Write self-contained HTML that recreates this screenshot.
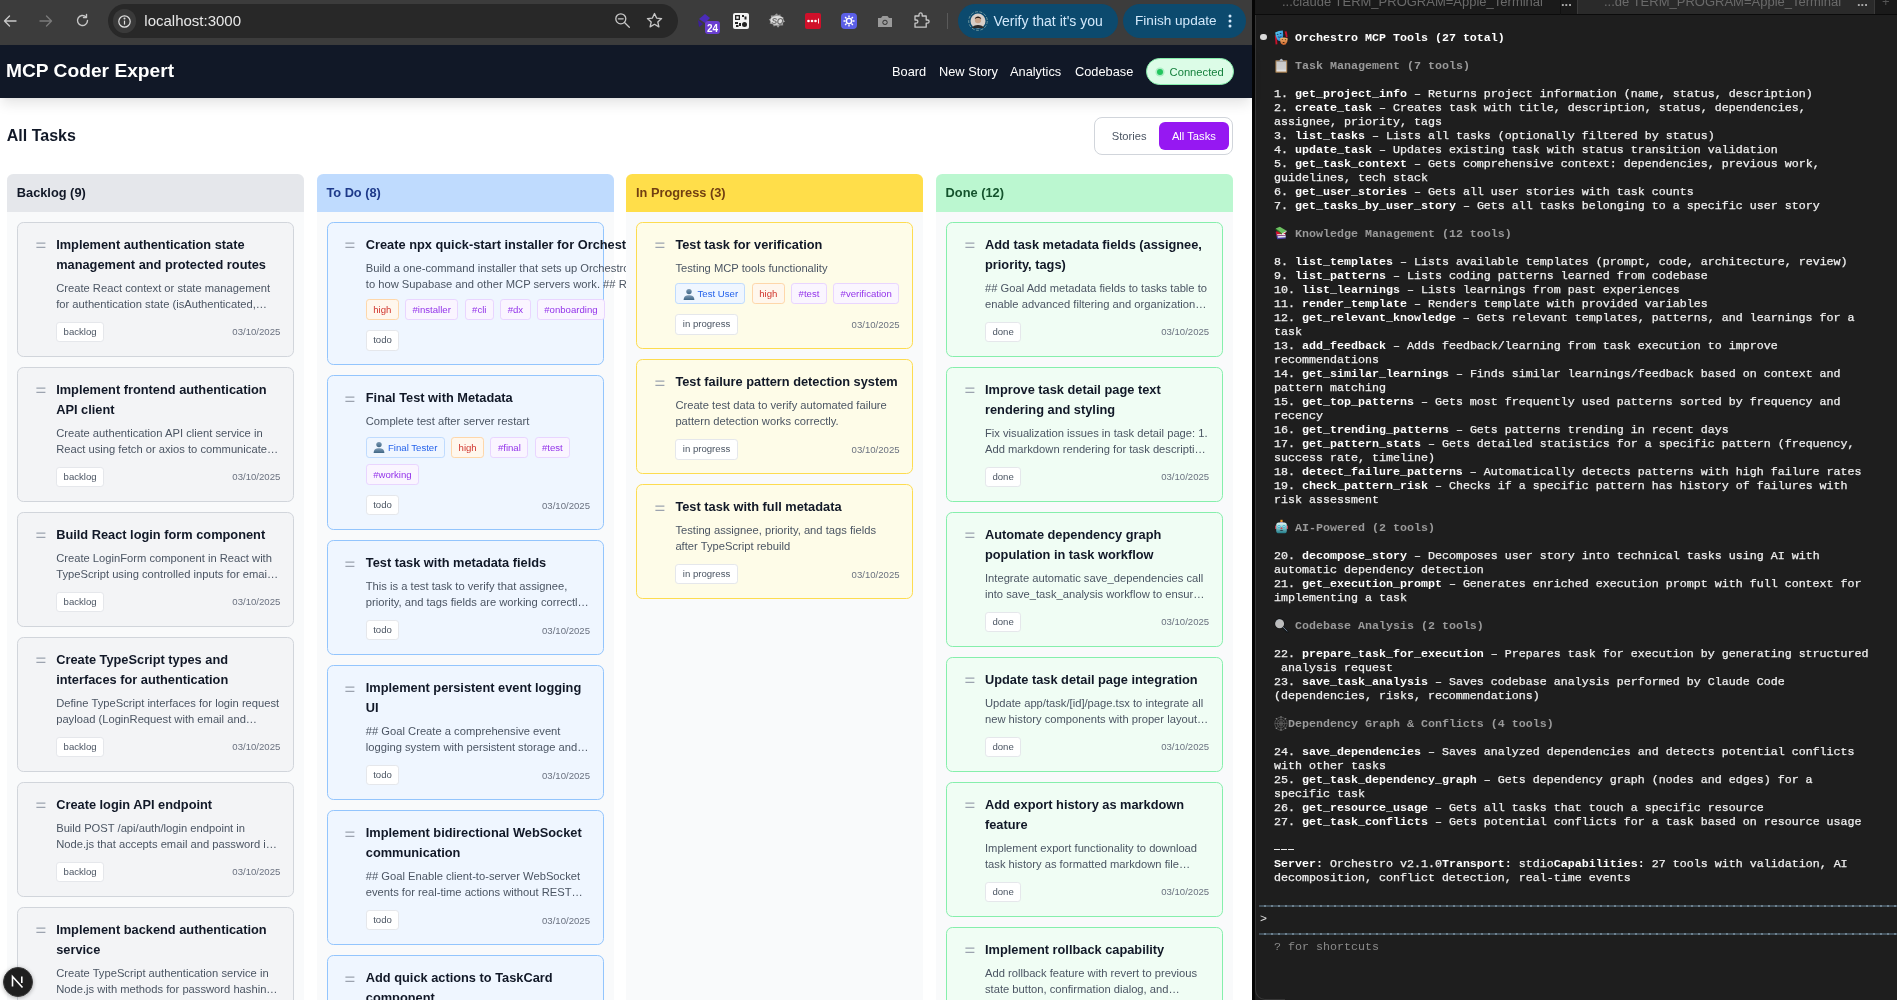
<!DOCTYPE html>
<html><head><meta charset="utf-8"><title>MCP Coder Expert</title><style>
*{box-sizing:border-box;margin:0;padding:0}
html,body{width:1897px;height:1000px;overflow:hidden}
body{position:relative;background:#1e1e1e;font-family:"Liberation Sans",sans-serif}
#chrome{position:absolute;left:0;top:0;width:1252px;height:45px;background:#3c3c3c;will-change:transform}
#nav{position:absolute;left:0;top:45px;width:1252px;height:53px;background:#111827;z-index:2;box-shadow:0 8px 12px -2.4px rgba(0,0,0,0.1),0 3.2px 4.8px -3.2px rgba(0,0,0,0.1)}
#page{position:absolute;left:0;top:98px;width:1252px;height:902px;background:#fff;overflow:hidden;will-change:transform}
#term{position:absolute;left:1252px;top:0;width:645px;height:1000px;background:#1e1e1e;overflow:hidden;will-change:transform}
.logo{will-change:transform;z-index:3;position:absolute;left:5.5px;top:57.8px;font-size:19.2px;font-weight:700;color:#fff;line-height:25px;white-space:nowrap}
.nl{will-change:transform;position:absolute;top:62px;font-size:12.8px;color:#fff;line-height:19px;white-space:nowrap}
.conn{will-change:transform;position:absolute;left:1146px;top:58px;width:88px;height:27px;border:1px solid #86efac;background:#dcfce7;border-radius:14px}
.conn .dot{position:absolute;left:9.6px;top:9.6px;width:6.4px;height:6.4px;border-radius:50%;background:#22c55e;box-shadow:0 0 0 1.6px rgba(34,197,94,0.25)}
.conn .ct{position:absolute;left:22.6px;top:5px;font-size:11.2px;line-height:16px;color:#15803d;white-space:nowrap}
h2{position:absolute;left:6.8px;top:27.2px;font-size:16px;font-weight:700;line-height:22.4px;color:#111827;white-space:nowrap}
.tog{position:absolute;left:1094.3px;top:19.2px;width:138.5px;height:37.5px;border:1px solid #d1d5db;border-radius:8px;background:#fff}
.tog .b1{position:absolute;left:16.5px;top:10px;font-size:11.2px;line-height:16px;color:#4b5563}
.tog .b2{position:absolute;left:63.7px;top:3.8px;width:69.8px;height:27.8px;border-radius:6px;background:#9618f2;color:#fff;font-size:11.2px;line-height:29.4px;text-align:center}
.col{position:absolute;top:76px;width:296.9px;height:900px;background:#f9fafb;border-radius:6.4px 6.4px 0 0}
.chd{height:37.6px;line-height:37.6px;padding-left:9.6px;font-size:12.8px;font-weight:700;border-radius:6.4px 6.4px 0 0;white-space:nowrap}
.cbd{padding:10.4px 9.9px 0 9.9px}
.card{position:relative;border:1px solid;border-radius:6.4px;padding:11.8px 12.8px 13.8px 12.8px;margin-bottom:10px;width:277.1px}
.card .hdl{position:absolute;left:16.8px;top:18.5px}
.cc{margin-left:25.3px}
.ttl{font-size:12.8px;font-weight:700;line-height:20px;color:#111827;white-space:nowrap}
.dsc{margin-top:5.2px;font-size:11.2px;line-height:16px;color:#4b5563;white-space:nowrap}
.tags{margin-top:7.2px}
.trow{display:flex;gap:6.4px;margin-bottom:6.4px;height:21.2px}
.trow:last-child{margin-bottom:0}
.tag{display:inline-flex;align-items:center;height:21.2px;border:1px solid;border-radius:3.2px;padding:0 6.4px;font-size:9.6px;white-space:nowrap}
.tu{background:#eff6ff;border-color:#bfdbfe;color:#2563eb}
.tu .usr{margin-right:2.8px}
.tp{background:#fff7ed;border-color:#fed7aa;color:#d0342c}
.tt{background:#faf5ff;border-color:#e9d5ff;color:#9333ea}
.ftr{margin-top:9.8px;display:flex;justify-content:space-between;align-items:center;height:20.4px}
.sb{display:inline-block;height:20.4px;line-height:18.4px;border:1px solid #e5e7eb;background:#fff;border-radius:3.2px;padding:0 6.4px;font-size:9.6px;color:#4b5563;white-space:nowrap}
.dt{font-size:9.6px;color:#6b7280;white-space:nowrap}
.wide{width:277.1px}

.nbtn{position:absolute;left:3px;top:967px;width:30px;height:30px;border-radius:50%;background:#1f1f1f;border:1.5px solid #3a3a3a;box-shadow:0 1px 4px rgba(0,0,0,0.3)}
/* terminal */
#tabs{position:absolute;left:0;top:0;width:645px;height:15px;background:#1a1a1a;border-bottom:1px solid #0b0b0b}
.tab{position:absolute;top:-8.5px;height:20px;font-size:13px;color:#6a6a6a;white-space:nowrap;line-height:20px}
#tbody{position:absolute;left:8px;top:31px;font-family:"Liberation Mono",monospace;font-size:11.667px;color:#e8e8e8}
.tl{position:relative;height:14px;line-height:14px;white-space:pre}
.ind{padding-left:14px}
.tb{font-weight:700;color:#fff}
.th{font-weight:700;color:#9a9a9a}
.tn{color:#f0f0f0;-webkit-text-stroke:0.25px #f0f0f0}
.tdot{position:absolute;left:0.1px;top:2.5px;width:6.8px;height:6.8px;border-radius:50%;background:#d9d9d9}
.tem{position:absolute;top:0.5px;line-height:0}
</style></head>
<body>
<div id="chrome"><svg style="position:absolute;left:3px;top:14px" width="14" height="14" viewBox="0 0 14 14" fill="none" stroke="#c8c8c8" stroke-width="1.4" stroke-linecap="round" stroke-linejoin="round"><path d="M13 7H1.5M6.5 2L1.5 7l5 5"/></svg><svg style="position:absolute;left:39px;top:14px" width="14" height="14" viewBox="0 0 14 14" fill="none" stroke="#7a7a7a" stroke-width="1.4" stroke-linecap="round" stroke-linejoin="round"><path d="M1 7h11.5M7.5 2l5 5-5 5"/></svg><svg style="position:absolute;left:75px;top:13px" width="15" height="15" viewBox="0 0 15 15" fill="none" stroke="#c8c8c8" stroke-width="1.4" stroke-linecap="round"><path d="M12.5 7.5a5 5 0 1 1-1.6-3.7"/><path d="M11.5 1.5v3h-3" stroke-linejoin="round"/></svg><div style="position:absolute;left:108px;top:4.4px;width:570px;height:33.2px;border-radius:17px;background:#282828"></div><div style="position:absolute;left:113px;top:9.3px;width:23.4px;height:23.4px;border-radius:50%;background:#3a3a3a"></div><svg style="position:absolute;left:118.3px;top:14.6px" width="13" height="13" viewBox="0 0 13 13" fill="none" stroke="#e0e0e0" stroke-width="1.2"><circle cx="6.5" cy="6.5" r="5.7"/><path d="M6.5 5.6v4"/><circle cx="6.5" cy="3.6" r="0.4" fill="#e0e0e0"/></svg><div style="position:absolute;left:144.3px;top:11px;font-size:15px;line-height:20px;color:#e8e8e8;white-space:nowrap">localhost:3000</div><svg style="position:absolute;left:614px;top:12px" width="17" height="17" viewBox="0 0 17 17" fill="none" stroke="#c8c8c8" stroke-width="1.3" stroke-linecap="round"><circle cx="6.8" cy="6.8" r="5"/><path d="M4.4 6.8h4.8M10.5 10.5l4.8 4.8"/></svg><svg style="position:absolute;left:646px;top:12px" width="17" height="17" viewBox="0 0 17 17" fill="none" stroke="#c8c8c8" stroke-width="1.3" stroke-linejoin="round"><path d="M8.5 1.5l2.1 4.6 5 .5-3.8 3.4 1.1 4.9-4.4-2.6-4.4 2.6 1.1-4.9L1.4 6.6l5-.5z"/></svg><svg style="position:absolute;left:697px;top:11px" width="24" height="24" viewBox="0 0 24 24"><path d="M2 8 L8 3 L13 7 L8 12 Z" fill="#4a2bb8"/><path d="M1 9 L6 13 L2 16 Z" fill="#3b1f9a"/><rect x="8" y="10" width="15" height="13" rx="3" fill="#6a3fd1"/><text x="15.5" y="20.5" font-size="10" font-weight="700" fill="#fff" text-anchor="middle" font-family="Liberation Sans">24</text></svg><div style="position:absolute;left:733px;top:13px;width:16px;height:16px;background:#f2f2f2;border-radius:2px"></div><svg style="position:absolute;left:734px;top:14px" width="14" height="14" viewBox="0 0 14 14" fill="#222"><rect x="1" y="1" width="5" height="5"/><rect x="2.3" y="2.3" width="2.4" height="2.4" fill="#f2f2f2"/><rect x="8" y="1" width="2" height="2"/><rect x="10.5" y="2.5" width="2" height="3"/><rect x="1" y="8" width="3" height="2"/><rect x="2" y="11" width="2.5" height="2"/><rect x="5" y="9" width="2" height="3"/><circle cx="10.5" cy="10.5" r="2.5"/></svg><svg style="position:absolute;left:768px;top:12px" width="18" height="17" viewBox="0 0 18 17"><path d="M9 1.2 L9.8 3 L12.6 2.6 L12.4 4.2 L15.6 5.4 L15 7.4 L17.2 9.6 L15 10.6 L15.2 13.4 L12.2 13 L10 15.8 L8.4 13.6 L5.6 14.4 L5.2 12.4 L1.6 11.6 L2.6 9.4 L0.8 7.4 L3.2 6.2 L2.8 3.6 L6 3.6 Z" fill="#9a9a9a"/><path d="M2.4 8.6 Q2 4.6 8.6 4 Q15.4 3.8 15.6 8.4 Q15.8 12.6 9 12.8 Q2.8 13 2.4 8.6 Z" fill="#dcdcdc"/><text x="9.2" y="11.6" font-family="Liberation Sans" font-weight="700" font-style="italic" font-size="8.6" fill="#6e6e6e" text-anchor="middle" letter-spacing="-0.4">SQ</text></svg><div style="position:absolute;left:805px;top:13px;width:16px;height:16px;background:#d0102a;border-radius:2px"></div><svg style="position:absolute;left:805px;top:13px" width="16" height="16" viewBox="0 0 16 16" fill="#fff"><circle cx="3.5" cy="8" r="1.3"/><circle cx="7" cy="8" r="1.3"/><circle cx="10.5" cy="8" r="1.3"/><rect x="13" y="5.5" width="0.9" height="5"/></svg><div style="position:absolute;left:841px;top:13px;width:16px;height:16px;background:#5b5fe8;border-radius:4px"></div><svg style="position:absolute;left:841px;top:13px" width="16" height="16" viewBox="0 0 16 16" fill="none" stroke="#fff" stroke-width="1.4"><circle cx="8" cy="8" r="2.6"/><path d="M8 2.5v2M8 11.5v2M2.5 8h2M11.5 8h2M4.1 4.1l1.4 1.4M10.5 10.5l1.4 1.4M4.1 11.9l1.4-1.4M10.5 5.5l1.4-1.4"/></svg><svg style="position:absolute;left:877px;top:14px" width="16" height="14" viewBox="0 0 16 14"><path d="M1 4h3l1.5-2h5L12 4h3v9H1z" fill="#9a9a9a"/><circle cx="8" cy="8.3" r="2.6" fill="#3c3c3c"/><circle cx="8" cy="8.3" r="1.6" fill="#9a9a9a"/></svg><svg style="position:absolute;left:913px;top:12px" width="17" height="17" viewBox="0 0 17 17" fill="none" stroke="#c8c8c8" stroke-width="1.3" stroke-linejoin="round"><path d="M2 4h4V2.5a1.6 1.6 0 0 1 3.2 0V4h4v4h1.3a1.6 1.6 0 0 1 0 3.2H13.2v4H2v-4h1.3a1.6 1.6 0 0 0 0-3.2H2z"/></svg><div style="position:absolute;left:946.5px;top:13px;width:1px;height:16px;background:#5a5a5a"></div><div style="position:absolute;left:958px;top:4.2px;width:160px;height:33.6px;border-radius:17px;background:#0c4a6e"></div><svg style="position:absolute;left:968px;top:11px" width="20" height="20" viewBox="0 0 20 20"><circle cx="10" cy="10" r="9.3" fill="none" stroke="#8aa" stroke-width="0.8" stroke-dasharray="3 1.5"/><circle cx="10" cy="10" r="7.5" fill="#d8cfc8"/><path d="M4 17 C5 13 15 13 16 17 Z" fill="#2a2a2a"/><circle cx="10" cy="9" r="3.2" fill="#c9a48a"/><path d="M6.8 8 C7 4.5 13 4.5 13.2 8 C12 6.5 8 6.5 6.8 8Z" fill="#2b2018"/></svg><div style="position:absolute;left:993.5px;top:10.5px;font-size:14px;line-height:20px;color:#d3e9fb;white-space:nowrap">Verify that it's you</div><div style="position:absolute;left:1123px;top:4.2px;width:122.8px;height:33.6px;border-radius:17px;background:#0c4a6e"></div><div style="position:absolute;left:1135px;top:10.5px;font-size:13.6px;line-height:20px;color:#d3e9fb;white-space:nowrap">Finish update</div><svg style="position:absolute;left:1227px;top:13px" width="6" height="16" viewBox="0 0 6 16" fill="#d3e9fb"><circle cx="3" cy="3" r="1.5"/><circle cx="3" cy="8" r="1.5"/><circle cx="3" cy="13" r="1.5"/></svg></div>
<div id="nav"></div>
<div class="logo">MCP Coder Expert</div>
<div class="nl" style="left:892px;z-index:3">Board</div>
<div class="nl" style="left:938.8px;z-index:3">New Story</div>
<div class="nl" style="left:1010px;z-index:3">Analytics</div>
<div class="nl" style="left:1075.3px;z-index:3">Codebase</div>
<div class="conn" style="z-index:3"><span class="dot"></span><span class="ct">Connected</span></div>
<div id="page">
<h2>All Tasks</h2>
<div class="tog"><span class="b1">Stories</span><span class="b2">All Tasks</span></div>
<div class="col" style="left:7.20px"><div class="chd" style="background:#e5e7eb;color:#111827">Backlog (9)</div><div class="cbd"><div class="card " style="background:#f3f4f6;border-color:#d1d5db"><svg class="hdl" width="12" height="8" viewBox="0 0 12 8" fill="none" stroke="#9ca3af" stroke-width="1.25" stroke-linecap="butt"><path d="M1.4 2.2h9M1.4 6.4h9"/></svg><div class="cc"><div class="ttl">Implement authentication state<br>management and protected routes</div><div class="dsc">Create React context or state management<br>for authentication state (isAuthenticated,…</div><div class="ftr"><span class="sb">backlog</span><span class="dt">03/10/2025</span></div></div></div><div class="card " style="background:#f3f4f6;border-color:#d1d5db"><svg class="hdl" width="12" height="8" viewBox="0 0 12 8" fill="none" stroke="#9ca3af" stroke-width="1.25" stroke-linecap="butt"><path d="M1.4 2.2h9M1.4 6.4h9"/></svg><div class="cc"><div class="ttl">Implement frontend authentication<br>API client</div><div class="dsc">Create authentication API client service in<br>React using fetch or axios to communicate…</div><div class="ftr"><span class="sb">backlog</span><span class="dt">03/10/2025</span></div></div></div><div class="card " style="background:#f3f4f6;border-color:#d1d5db"><svg class="hdl" width="12" height="8" viewBox="0 0 12 8" fill="none" stroke="#9ca3af" stroke-width="1.25" stroke-linecap="butt"><path d="M1.4 2.2h9M1.4 6.4h9"/></svg><div class="cc"><div class="ttl">Build React login form component</div><div class="dsc">Create LoginForm component in React with<br>TypeScript using controlled inputs for emai…</div><div class="ftr"><span class="sb">backlog</span><span class="dt">03/10/2025</span></div></div></div><div class="card " style="background:#f3f4f6;border-color:#d1d5db"><svg class="hdl" width="12" height="8" viewBox="0 0 12 8" fill="none" stroke="#9ca3af" stroke-width="1.25" stroke-linecap="butt"><path d="M1.4 2.2h9M1.4 6.4h9"/></svg><div class="cc"><div class="ttl">Create TypeScript types and<br>interfaces for authentication</div><div class="dsc">Define TypeScript interfaces for login request<br>payload (LoginRequest with email and…</div><div class="ftr"><span class="sb">backlog</span><span class="dt">03/10/2025</span></div></div></div><div class="card " style="background:#f3f4f6;border-color:#d1d5db"><svg class="hdl" width="12" height="8" viewBox="0 0 12 8" fill="none" stroke="#9ca3af" stroke-width="1.25" stroke-linecap="butt"><path d="M1.4 2.2h9M1.4 6.4h9"/></svg><div class="cc"><div class="ttl">Create login API endpoint</div><div class="dsc">Build POST /api/auth/login endpoint in<br>Node.js that accepts email and password i…</div><div class="ftr"><span class="sb">backlog</span><span class="dt">03/10/2025</span></div></div></div><div class="card " style="background:#f3f4f6;border-color:#d1d5db"><svg class="hdl" width="12" height="8" viewBox="0 0 12 8" fill="none" stroke="#9ca3af" stroke-width="1.25" stroke-linecap="butt"><path d="M1.4 2.2h9M1.4 6.4h9"/></svg><div class="cc"><div class="ttl">Implement backend authentication<br>service</div><div class="dsc">Create TypeScript authentication service in<br>Node.js with methods for password hashin…</div><div class="ftr"><span class="sb">backlog</span><span class="dt">03/10/2025</span></div></div></div></div></div><div class="col" style="left:316.80px"><div class="chd" style="background:#bfdbfe;color:#1e3a8a">To Do (8)</div><div class="cbd"><div class="card wide plus1" style="background:#eff6ff;border-color:#93c5fd"><svg class="hdl" width="12" height="8" viewBox="0 0 12 8" fill="none" stroke="#9ca3af" stroke-width="1.25" stroke-linecap="butt"><path d="M1.4 2.2h9M1.4 6.4h9"/></svg><div class="cc"><div class="ttl">Create npx quick-start installer for Orchestro with one-command setup</div><div class="dsc">Build a one-command installer that sets up Orchestro MCP server similar<br>to how Supabase and other MCP servers work. ## Requirements</div><div class="tags"><div class="trow"><span class="tag tp">high</span><span class="tag tt">#installer</span><span class="tag tt">#cli</span><span class="tag tt">#dx</span><span class="tag tt">#onboarding</span></div></div><div class="ftr"><span class="sb">todo</span></div></div></div><div class="card plus1" style="background:#eff6ff;border-color:#93c5fd"><svg class="hdl" width="12" height="8" viewBox="0 0 12 8" fill="none" stroke="#9ca3af" stroke-width="1.25" stroke-linecap="butt"><path d="M1.4 2.2h9M1.4 6.4h9"/></svg><div class="cc"><div class="ttl">Final Test with Metadata</div><div class="dsc">Complete test after server restart</div><div class="tags"><div class="trow"><span class="tag tu"><svg class="usr" width="12" height="12" viewBox="0 0 12 12"><defs><linearGradient id="ug" x1="0" y1="0" x2="0" y2="1"><stop offset="0" stop-color="#7e9bb5"/><stop offset="1" stop-color="#3f6685"/></linearGradient></defs><circle cx="6" cy="3.6" r="2.7" fill="url(#ug)"/><path d="M0.6 12 C0.8 8.2 2.8 7.2 6 7.2 C9.2 7.2 11.2 8.2 11.4 12 Z" fill="url(#ug)"/></svg>Final Tester</span><span class="tag tp">high</span><span class="tag tt">#final</span><span class="tag tt">#test</span></div><div class="trow"><span class="tag tt">#working</span></div></div><div class="ftr"><span class="sb">todo</span><span class="dt">03/10/2025</span></div></div></div><div class="card " style="background:#eff6ff;border-color:#93c5fd"><svg class="hdl" width="12" height="8" viewBox="0 0 12 8" fill="none" stroke="#9ca3af" stroke-width="1.25" stroke-linecap="butt"><path d="M1.4 2.2h9M1.4 6.4h9"/></svg><div class="cc"><div class="ttl">Test task with metadata fields</div><div class="dsc">This is a test task to verify that assignee,<br>priority, and tags fields are working correctl…</div><div class="ftr"><span class="sb">todo</span><span class="dt">03/10/2025</span></div></div></div><div class="card " style="background:#eff6ff;border-color:#93c5fd"><svg class="hdl" width="12" height="8" viewBox="0 0 12 8" fill="none" stroke="#9ca3af" stroke-width="1.25" stroke-linecap="butt"><path d="M1.4 2.2h9M1.4 6.4h9"/></svg><div class="cc"><div class="ttl">Implement persistent event logging<br>UI</div><div class="dsc">## Goal Create a comprehensive event<br>logging system with persistent storage and…</div><div class="ftr"><span class="sb">todo</span><span class="dt">03/10/2025</span></div></div></div><div class="card " style="background:#eff6ff;border-color:#93c5fd"><svg class="hdl" width="12" height="8" viewBox="0 0 12 8" fill="none" stroke="#9ca3af" stroke-width="1.25" stroke-linecap="butt"><path d="M1.4 2.2h9M1.4 6.4h9"/></svg><div class="cc"><div class="ttl">Implement bidirectional WebSocket<br>communication</div><div class="dsc">## Goal Enable client-to-server WebSocket<br>events for real-time actions without REST…</div><div class="ftr"><span class="sb">todo</span><span class="dt">03/10/2025</span></div></div></div><div class="card " style="background:#eff6ff;border-color:#93c5fd"><svg class="hdl" width="12" height="8" viewBox="0 0 12 8" fill="none" stroke="#9ca3af" stroke-width="1.25" stroke-linecap="butt"><path d="M1.4 2.2h9M1.4 6.4h9"/></svg><div class="cc"><div class="ttl">Add quick actions to TaskCard<br>component</div><div class="dsc">Add quick action buttons to TaskCard for<br>status changes…</div><div class="ftr"><span class="sb">todo</span><span class="dt">03/10/2025</span></div></div></div></div></div><div class="col" style="left:626.40px"><div class="chd" style="background:#ffde4a;color:#713f12">In Progress (3)</div><div class="cbd"><div class="card " style="background:#fefce8;border-color:#fddc50"><svg class="hdl" width="12" height="8" viewBox="0 0 12 8" fill="none" stroke="#9ca3af" stroke-width="1.25" stroke-linecap="butt"><path d="M1.4 2.2h9M1.4 6.4h9"/></svg><div class="cc"><div class="ttl">Test task for verification</div><div class="dsc">Testing MCP tools functionality</div><div class="tags"><div class="trow"><span class="tag tu"><svg class="usr" width="12" height="12" viewBox="0 0 12 12"><defs><linearGradient id="ug" x1="0" y1="0" x2="0" y2="1"><stop offset="0" stop-color="#7e9bb5"/><stop offset="1" stop-color="#3f6685"/></linearGradient></defs><circle cx="6" cy="3.6" r="2.7" fill="url(#ug)"/><path d="M0.6 12 C0.8 8.2 2.8 7.2 6 7.2 C9.2 7.2 11.2 8.2 11.4 12 Z" fill="url(#ug)"/></svg>Test User</span><span class="tag tp">high</span><span class="tag tt">#test</span><span class="tag tt">#verification</span></div></div><div class="ftr"><span class="sb">in progress</span><span class="dt">03/10/2025</span></div></div></div><div class="card " style="background:#fefce8;border-color:#fddc50"><svg class="hdl" width="12" height="8" viewBox="0 0 12 8" fill="none" stroke="#9ca3af" stroke-width="1.25" stroke-linecap="butt"><path d="M1.4 2.2h9M1.4 6.4h9"/></svg><div class="cc"><div class="ttl">Test failure pattern detection system</div><div class="dsc">Create test data to verify automated failure<br>pattern detection works correctly.</div><div class="ftr"><span class="sb">in progress</span><span class="dt">03/10/2025</span></div></div></div><div class="card " style="background:#fefce8;border-color:#fddc50"><svg class="hdl" width="12" height="8" viewBox="0 0 12 8" fill="none" stroke="#9ca3af" stroke-width="1.25" stroke-linecap="butt"><path d="M1.4 2.2h9M1.4 6.4h9"/></svg><div class="cc"><div class="ttl">Test task with full metadata</div><div class="dsc">Testing assignee, priority, and tags fields<br>after TypeScript rebuild</div><div class="ftr"><span class="sb">in progress</span><span class="dt">03/10/2025</span></div></div></div></div></div><div class="col" style="left:936.00px"><div class="chd" style="background:#bbf7d0;color:#14532d">Done (12)</div><div class="cbd"><div class="card " style="background:#f0fdf4;border-color:#86efac"><svg class="hdl" width="12" height="8" viewBox="0 0 12 8" fill="none" stroke="#9ca3af" stroke-width="1.25" stroke-linecap="butt"><path d="M1.4 2.2h9M1.4 6.4h9"/></svg><div class="cc"><div class="ttl">Add task metadata fields (assignee,<br>priority, tags)</div><div class="dsc">## Goal Add metadata fields to tasks table to<br>enable advanced filtering and organization…</div><div class="ftr"><span class="sb">done</span><span class="dt">03/10/2025</span></div></div></div><div class="card " style="background:#f0fdf4;border-color:#86efac"><svg class="hdl" width="12" height="8" viewBox="0 0 12 8" fill="none" stroke="#9ca3af" stroke-width="1.25" stroke-linecap="butt"><path d="M1.4 2.2h9M1.4 6.4h9"/></svg><div class="cc"><div class="ttl">Improve task detail page text<br>rendering and styling</div><div class="dsc">Fix visualization issues in task detail page: 1.<br>Add markdown rendering for task descripti…</div><div class="ftr"><span class="sb">done</span><span class="dt">03/10/2025</span></div></div></div><div class="card " style="background:#f0fdf4;border-color:#86efac"><svg class="hdl" width="12" height="8" viewBox="0 0 12 8" fill="none" stroke="#9ca3af" stroke-width="1.25" stroke-linecap="butt"><path d="M1.4 2.2h9M1.4 6.4h9"/></svg><div class="cc"><div class="ttl">Automate dependency graph<br>population in task workflow</div><div class="dsc">Integrate automatic save_dependencies call<br>into save_task_analysis workflow to ensur…</div><div class="ftr"><span class="sb">done</span><span class="dt">03/10/2025</span></div></div></div><div class="card " style="background:#f0fdf4;border-color:#86efac"><svg class="hdl" width="12" height="8" viewBox="0 0 12 8" fill="none" stroke="#9ca3af" stroke-width="1.25" stroke-linecap="butt"><path d="M1.4 2.2h9M1.4 6.4h9"/></svg><div class="cc"><div class="ttl">Update task detail page integration</div><div class="dsc">Update app/task/[id]/page.tsx to integrate all<br>new history components with proper layout…</div><div class="ftr"><span class="sb">done</span><span class="dt">03/10/2025</span></div></div></div><div class="card " style="background:#f0fdf4;border-color:#86efac"><svg class="hdl" width="12" height="8" viewBox="0 0 12 8" fill="none" stroke="#9ca3af" stroke-width="1.25" stroke-linecap="butt"><path d="M1.4 2.2h9M1.4 6.4h9"/></svg><div class="cc"><div class="ttl">Add export history as markdown<br>feature</div><div class="dsc">Implement export functionality to download<br>task history as formatted markdown file…</div><div class="ftr"><span class="sb">done</span><span class="dt">03/10/2025</span></div></div></div><div class="card " style="background:#f0fdf4;border-color:#86efac"><svg class="hdl" width="12" height="8" viewBox="0 0 12 8" fill="none" stroke="#9ca3af" stroke-width="1.25" stroke-linecap="butt"><path d="M1.4 2.2h9M1.4 6.4h9"/></svg><div class="cc"><div class="ttl">Implement rollback capability</div><div class="dsc">Add rollback feature with revert to previous<br>state button, confirmation dialog, and…</div><div class="ftr"><span class="sb">done</span><span class="dt">03/10/2025</span></div></div></div></div></div>
</div>
<div class="nbtn" style="z-index:5"><svg width="27" height="27" viewBox="0 0 27 27" style="position:absolute;left:0;top:0"><path d="M8.5 18.5V8.5L18.5 19.5" fill="none" stroke="#fff" stroke-width="1.6"/><path d="M17.8 8.5v6.5" stroke="#fff" stroke-width="1.6"/></svg></div>
<div id="term">
<div id="tabs">
<div class="tab" style="left:30px">...claude TERM_PROGRAM=Apple_Terminal</div>
<div style="position:absolute;left:308px;top:0;width:1px;height:15px;background:#111"></div>
<div style="position:absolute;left:325px;top:0;width:298px;height:14px;background:#2a2a2a;border-left:1px solid #3a3a3a;border-right:1px solid #3a3a3a"></div>
<div class="tab" style="left:352px">...de TERM_PROGRAM=Apple_Terminal</div>
<div class="tab" style="left:309px;color:#aaa;font-weight:700">...</div>
<div class="tab" style="left:605px;color:#aaa;font-weight:700">...</div>
<div class="tab" style="left:630px;color:#555">+</div>
</div>
<div style="position:absolute;left:0;top:0;width:3px;height:1000px;background:#050505"></div><div style="position:absolute;left:3px;top:15px;width:30px;height:985px;border-left:1px solid #363636;border-bottom:1px solid #363636;border-bottom-left-radius:10px"></div>
<div id="tbody"><div class="tl"><span class="tdot"></span><span class="tem" style="left:14.2px;top:-1.2px"><svg width="15" height="15" viewBox="0 0 15 15"><defs><linearGradient id="mbg" x1="0" y1="0" x2="1" y2="1"><stop offset="0" stop-color="#5ccff5"/><stop offset="1" stop-color="#2a7fd0"/></linearGradient><linearGradient id="mog" x1="0" y1="0" x2="0" y2="1"><stop offset="0" stop-color="#f4b870"/><stop offset="1" stop-color="#c8602a"/></linearGradient></defs><path d="M0.8 5.5 Q1.2 10 1.6 14.4 L3.4 14.2 Q3 9 2.6 5.2 Z" fill="#c8102a"/><path d="M10.6 1.4 Q11.4 4 12 7.4 L13.6 7.2 Q13.2 3.6 12.6 1.2 Z" fill="#c8102a"/><path d="M1.2 2.4 Q4.6 0.6 8.8 0.4 Q9.8 5 8.6 8.4 Q7 11.4 4.6 10.8 Q2.2 9.6 1.2 2.4 Z" fill="url(#mbg)"/><ellipse cx="3.6" cy="4.2" rx="0.9" ry="0.5" fill="#143050"/><ellipse cx="6.6" cy="3.6" rx="0.9" ry="0.5" fill="#143050"/><path d="M3.8 6.8 Q5.6 7.8 7.4 6.6" stroke="#143050" stroke-width="0.7" fill="none"/><path d="M6.2 8.2 Q9.6 6.8 13.6 8.2 Q14 12.4 11.6 14.4 Q9 15.6 7.2 13.8 Q5.8 11.8 6.2 8.2 Z" fill="url(#mog)"/><ellipse cx="8.4" cy="9.4" rx="0.8" ry="0.45" fill="#3a2410"/><ellipse cx="11.4" cy="9.8" rx="0.8" ry="0.45" fill="#3a2410"/><ellipse cx="9.6" cy="12.6" rx="1" ry="0.5" fill="#3a2410"/></svg></span><span style="padding-left:35px"></span><span class="tb">Orchestro MCP Tools (27 total)</span></div><div class="tl"></div><div class="tl"><span class="tem" style="left:14.7px;top:-1.4px"><svg width="13" height="15" viewBox="0 0 13 15"><defs><linearGradient id="cpg" x1="0" y1="0" x2="0" y2="1"><stop offset="0" stop-color="#c8c8c8"/><stop offset="0.75" stop-color="#cdcdcd"/><stop offset="1" stop-color="#ececec"/></linearGradient></defs><rect x="0.4" y="2.2" width="11.8" height="12.5" rx="0.6" fill="#a9804f"/><rect x="1.4" y="3.6" width="9.8" height="9.9" fill="url(#cpg)"/><path d="M4.4 2.9 L5.2 1.4 Q6.3 0.3 7.4 1.4 L8.2 2.9 Z" fill="#b4b9c2"/><rect x="1.4" y="2.9" width="9.8" height="0.8" fill="#9a9fa6"/></svg></span><span style="padding-left:35px"></span><span class="th">Task Management (7 tools)</span></div><div class="tl"></div><div class="tl ind"><span class="tn">1. </span><span class="tb">get_project_info</span><span class="tn"> – Returns project information (name, status, description)</span></div><div class="tl ind"><span class="tn">2. </span><span class="tb">create_task</span><span class="tn"> – Creates task with title, description, status, dependencies,</span></div><div class="tl ind"><span class="tn">assignee, priority, tags</span></div><div class="tl ind"><span class="tn">3. </span><span class="tb">list_tasks</span><span class="tn"> – Lists all tasks (optionally filtered by status)</span></div><div class="tl ind"><span class="tn">4. </span><span class="tb">update_task</span><span class="tn"> – Updates existing task with status transition validation</span></div><div class="tl ind"><span class="tn">5. </span><span class="tb">get_task_context</span><span class="tn"> – Gets comprehensive context: dependencies, previous work,</span></div><div class="tl ind"><span class="tn">guidelines, tech stack</span></div><div class="tl ind"><span class="tn">6. </span><span class="tb">get_user_stories</span><span class="tn"> – Gets all user stories with task counts</span></div><div class="tl ind"><span class="tn">7. </span><span class="tb">get_tasks_by_user_story</span><span class="tn"> – Gets all tasks belonging to a specific user story</span></div><div class="tl"></div><div class="tl"><span class="tem" style="left:14.6px;top:-1.4px"><svg width="13" height="14" viewBox="0 0 13 14"><path d="M0.6 6.2 L2.2 13.2 L10.8 12.6 L10.4 8.2 Z" fill="#4a3fa8"/><path d="M2.6 10.2 L10.6 9.6 L10.7 11.2 L2.9 11.8 Z" fill="#e8e8f0"/><path d="M0.8 5.6 L1.6 9.4 L10.2 9.2 L10.4 6.4 L4 5.2 Z" fill="#d3102a"/><path d="M2 8.2 L10.2 7.9 L10.2 9 L2.3 9.3 Z" fill="#f2f2f2"/><path d="M0.7 2.6 L4.8 0.8 L11.6 4.8 L7.2 7.8 Z" fill="#6cc160"/><path d="M0.7 2.6 L7.2 7.8 L6.6 8.4 L0.6 3.6 Z" fill="#2e7d2a"/><path d="M7 7.4 L11.6 4.8 L11.4 6 L7.2 8.6 Z" fill="#eeeeee"/></svg></span><span style="padding-left:35px"></span><span class="th">Knowledge Management (12 tools)</span></div><div class="tl"></div><div class="tl ind"><span class="tn">8. </span><span class="tb">list_templates</span><span class="tn"> – Lists available templates (prompt, code, architecture, review)</span></div><div class="tl ind"><span class="tn">9. </span><span class="tb">list_patterns</span><span class="tn"> – Lists coding patterns learned from codebase</span></div><div class="tl ind"><span class="tn">10. </span><span class="tb">list_learnings</span><span class="tn"> – Lists learnings from past experiences</span></div><div class="tl ind"><span class="tn">11. </span><span class="tb">render_template</span><span class="tn"> – Renders template with provided variables</span></div><div class="tl ind"><span class="tn">12. </span><span class="tb">get_relevant_knowledge</span><span class="tn"> – Gets relevant templates, patterns, and learnings for a</span></div><div class="tl ind"><span class="tn">task</span></div><div class="tl ind"><span class="tn">13. </span><span class="tb">add_feedback</span><span class="tn"> – Adds feedback/learning from task execution to improve</span></div><div class="tl ind"><span class="tn">recommendations</span></div><div class="tl ind"><span class="tn">14. </span><span class="tb">get_similar_learnings</span><span class="tn"> – Finds similar learnings/feedback based on context and</span></div><div class="tl ind"><span class="tn">pattern matching</span></div><div class="tl ind"><span class="tn">15. </span><span class="tb">get_top_patterns</span><span class="tn"> – Gets most frequently used patterns sorted by frequency and</span></div><div class="tl ind"><span class="tn">recency</span></div><div class="tl ind"><span class="tn">16. </span><span class="tb">get_trending_patterns</span><span class="tn"> – Gets patterns trending in recent days</span></div><div class="tl ind"><span class="tn">17. </span><span class="tb">get_pattern_stats</span><span class="tn"> – Gets detailed statistics for a specific pattern (frequency,</span></div><div class="tl ind"><span class="tn">success rate, timeline)</span></div><div class="tl ind"><span class="tn">18. </span><span class="tb">detect_failure_patterns</span><span class="tn"> – Automatically detects patterns with high failure rates</span></div><div class="tl ind"><span class="tn">19. </span><span class="tb">check_pattern_risk</span><span class="tn"> – Checks if a specific pattern has history of failures with</span></div><div class="tl ind"><span class="tn">risk assessment</span></div><div class="tl"></div><div class="tl"><span class="tem" style="left:14.5px;top:-2px"><svg width="13" height="15" viewBox="0 0 13 15"><defs><linearGradient id="rbg" x1="0" y1="0" x2="0" y2="1"><stop offset="0" stop-color="#dff5f3"/><stop offset="0.45" stop-color="#8fc9d0"/><stop offset="1" stop-color="#1f7d8a"/></linearGradient></defs><rect x="5.4" y="0.8" width="2.2" height="2.4" fill="#f59a2a"/><rect x="5" y="3" width="3" height="0.9" fill="#7b4fb0"/><rect x="0.1" y="6.4" width="1.6" height="3.6" rx="0.6" fill="#d0485a"/><rect x="11.3" y="6.4" width="1.6" height="3.6" rx="0.6" fill="#d0485a"/><rect x="1.2" y="3.5" width="10.6" height="10.8" rx="2.6" fill="url(#rbg)"/><circle cx="4" cy="7.6" r="1.5" fill="#3cb4cc"/><circle cx="9" cy="7.6" r="1.5" fill="#3cb4cc"/><circle cx="4" cy="7.6" r="0.6" fill="#fff"/><circle cx="9" cy="7.6" r="0.6" fill="#fff"/><circle cx="6.5" cy="9.2" r="1" fill="#c24a58"/><path d="M4.8 11.6 Q6.5 10.4 8.2 11.6 L8.2 12 L4.8 12 Z" fill="#2b3f48"/></svg></span><span style="padding-left:35px"></span><span class="th">AI-Powered (2 tools)</span></div><div class="tl"></div><div class="tl ind"><span class="tn">20. </span><span class="tb">decompose_story</span><span class="tn"> – Decomposes user story into technical tasks using AI with</span></div><div class="tl ind"><span class="tn">automatic dependency detection</span></div><div class="tl ind"><span class="tn">21. </span><span class="tb">get_execution_prompt</span><span class="tn"> – Generates enriched execution prompt with full context for</span></div><div class="tl ind"><span class="tn">implementing a task</span></div><div class="tl"></div><div class="tl"><span class="tem" style="left:14px;top:-1.4px"><svg width="15" height="15" viewBox="0 0 15 15"><path d="M8.6 9 L13.4 13.8" stroke="#15191d" stroke-width="2.4" stroke-linecap="round"/><path d="M9.2 9.2 L13 13" stroke="#6f7f90" stroke-width="0.9" stroke-linecap="round"/><circle cx="5.6" cy="5.7" r="5.1" fill="#101214"/><circle cx="5.6" cy="5.7" r="4.5" fill="#bdbdbd"/><path d="M2.2 4.2 A4 4 0 0 1 6.2 1.6" stroke="#aab8c4" stroke-width="0.7" fill="none"/></svg></span><span style="padding-left:35px"></span><span class="th">Codebase Analysis (2 tools)</span></div><div class="tl"></div><div class="tl ind"><span class="tn">22. </span><span class="tb">prepare_task_for_execution</span><span class="tn"> – Prepares task for execution by generating structured</span></div><div class="tl ind"><span class="tn"> analysis request</span></div><div class="tl ind"><span class="tn">23. </span><span class="tb">save_task_analysis</span><span class="tn"> – Saves codebase analysis performed by Claude Code</span></div><div class="tl ind"><span class="tn">(dependencies, risks, recommendations)</span></div><div class="tl"></div><div class="tl"><span class="tem" style="left:14px;top:-1px"><svg width="14" height="15" viewBox="0 0 14 15" fill="none" stroke="#5c5c5c" stroke-width="0.75"><path d="M7 0.8 L10.2 2.2 L12.8 5 L13 8.6 L11.6 12 L8.6 14 L5 14 L2.2 12 L0.9 8.6 L1.2 5 L3.6 2.2 Z"/><path d="M7 3.2 L9.2 4.2 L10.6 6.4 L10.6 9 L9.2 11 L7 12 L4.6 11 L3.4 9 L3.4 6.4 L4.8 4.2 Z"/><path d="M7 5.6 L8.4 6.6 L8.4 8.6 L7 9.6 L5.6 8.6 L5.6 6.6 Z"/><path d="M7 0.6 V14.4 M0.6 7.5 H13.4 M2.2 2.6 L11.8 12.4 M11.8 2.6 L2.2 12.4"/><circle cx="7" cy="1" r="0.7" fill="#8a8a8a" stroke="none"/><circle cx="2.4" cy="2.6" r="0.7" fill="#8a8a8a" stroke="none"/><circle cx="11.6" cy="2.6" r="0.7" fill="#8a8a8a" stroke="none"/><circle cx="2.4" cy="12.4" r="0.7" fill="#8a8a8a" stroke="none"/><circle cx="11.6" cy="12.4" r="0.7" fill="#8a8a8a" stroke="none"/><circle cx="7" cy="14" r="0.7" fill="#8a8a8a" stroke="none"/></svg></span><span style="padding-left:28px"></span><span class="th">Dependency Graph &amp; Conflicts (4 tools)</span></div><div class="tl"></div><div class="tl ind"><span class="tn">24. </span><span class="tb">save_dependencies</span><span class="tn"> – Saves analyzed dependencies and detects potential conflicts</span></div><div class="tl ind"><span class="tn">with other tasks</span></div><div class="tl ind"><span class="tn">25. </span><span class="tb">get_task_dependency_graph</span><span class="tn"> – Gets dependency graph (nodes and edges) for a</span></div><div class="tl ind"><span class="tn">specific task</span></div><div class="tl ind"><span class="tn">26. </span><span class="tb">get_resource_usage</span><span class="tn"> – Gets all tasks that touch a specific resource</span></div><div class="tl ind"><span class="tn">27. </span><span class="tb">get_task_conflicts</span><span class="tn"> – Gets potential conflicts for a task based on resource usage</span></div><div class="tl"></div><div class="tl ind"><span style="position:absolute;left:14px;top:5.9px;width:20px;height:1.2px;background:repeating-linear-gradient(90deg,#e8e8e8 0,#e8e8e8 6px,transparent 6px,transparent 7px)"></span></div><div class="tl ind"><span class="tb">Server:</span><span class="tn"> Orchestro v2.1.0</span><span class="tb">Transport:</span><span class="tn"> stdio</span><span class="tb">Capabilities:</span><span class="tn"> 27 tools with validation, AI</span></div><div class="tl ind"><span class="tn">decomposition, conflict detection, real-time events</span></div></div>
<div style="position:absolute;left:7px;top:905px;width:640px;height:2px;background:repeating-linear-gradient(90deg,#42505a 0,#42505a 5px,#6e8290 5px,#6e8290 7px)"></div>
<div style="position:absolute;left:8px;top:912px;font-family:'Liberation Mono',monospace;font-size:11.667px;line-height:14px;color:#e0e0e0">&gt;</div>
<div style="position:absolute;left:7px;top:933px;width:640px;height:2px;background:repeating-linear-gradient(90deg,#42505a 0,#42505a 5px,#6e8290 5px,#6e8290 7px)"></div>
<div style="position:absolute;left:22px;top:940px;font-family:'Liberation Mono',monospace;font-size:11.667px;line-height:14px;color:#8a8a8a;white-space:pre">? for shortcuts</div>
</div>
</body></html>
